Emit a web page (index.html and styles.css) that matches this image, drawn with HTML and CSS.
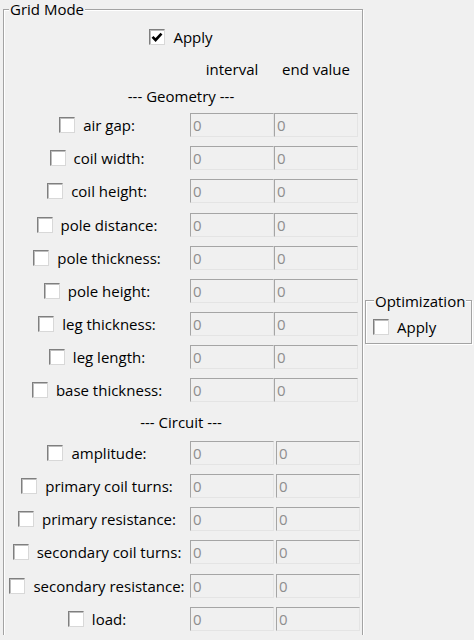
FILE: index.html
```html
<!DOCTYPE html>
<html>
<head>
<meta charset="utf-8">
<link rel="stylesheet" href="styles.css">
</head>
<body>
<div class="page">
  <fieldset class="panel grid-mode">
    <legend>Grid Mode</legend>
    <div class="grid">
      <div class="span-all center"><span class="cb checked"><svg viewBox="0 0 14 14" width="14" height="14"><path d="M2.5 6.8 L5.6 10 L11.5 3.6" fill="none" stroke="#000" stroke-width="2.6"/></svg></span><span>Apply</span></div>
      <div></div>
      <div class="colhead">interval</div>
      <div class="colhead">end value</div>
      <div class="span-all center section geo">--- Geometry ---</div>

      <div class="lbl"><span class="cb"></span><span>air gap:</span></div><div class="field">0</div><div class="field">0</div>
      <div class="lbl"><span class="cb"></span><span>coil width:</span></div><div class="field">0</div><div class="field">0</div>
      <div class="lbl"><span class="cb"></span><span>coil height:</span></div><div class="field">0</div><div class="field">0</div>
      <div class="lbl"><span class="cb"></span><span>pole distance:</span></div><div class="field">0</div><div class="field">0</div>
      <div class="lbl"><span class="cb"></span><span>pole thickness:</span></div><div class="field">0</div><div class="field">0</div>
      <div class="lbl"><span class="cb"></span><span>pole height:</span></div><div class="field">0</div><div class="field">0</div>
      <div class="lbl"><span class="cb"></span><span>leg thickness:</span></div><div class="field">0</div><div class="field">0</div>
      <div class="lbl"><span class="cb"></span><span>leg length:</span></div><div class="field">0</div><div class="field">0</div>
      <div class="lbl"><span class="cb"></span><span>base thickness:</span></div><div class="field">0</div><div class="field">0</div>

      <div class="span-all center section">--- Circuit ---</div>

      <div class="lbl"><span class="cb"></span><span>amplitude:</span></div><div class="field">0</div><div class="field">0</div>
      <div class="lbl"><span class="cb"></span><span>primary coil turns:</span></div><div class="field">0</div><div class="field">0</div>
      <div class="lbl"><span class="cb"></span><span>primary resistance:</span></div><div class="field">0</div><div class="field">0</div>
      <div class="lbl"><span class="cb"></span><span>secondary coil turns:</span></div><div class="field">0</div><div class="field">0</div>
      <div class="lbl"><span class="cb"></span><span>secondary resistance:</span></div><div class="field">0</div><div class="field">0</div>
      <div class="lbl"><span class="cb"></span><span>load:</span></div><div class="field">0</div><div class="field">0</div>
    </div>
  </fieldset>

  <fieldset class="panel optimization">
    <legend>Optimization</legend>
    <div class="opt-row"><span class="cb"></span><span>Apply</span></div>
  </fieldset>
</div>
</body>
</html>
```

FILE: styles.css
```css
html, body {
  margin: 0;
  padding: 0;
  background: #f0f0f0;
}

body {
  font-family: "Open Sans", "Noto Sans", sans-serif;
  font-size: 15px;
  line-height: 18px;
  color: #000;
}

.page {
  display: flex;
  align-items: flex-start;
  height: 635px;
  padding-left: 3px;
}

.panel {
  margin: 0;
  border: 1px solid #a3a3a3;
  box-shadow: inset 1px 1px 0 #fff, 1px 1px 0 #fff;
  min-width: 0;
}

.panel legend {
  padding: 0 1px;
  line-height: 18px;
  background: #f0f0f0;
}

.grid-mode {
  width: 357px;
  padding: 0 1px 0 0;
}

.grid-mode legend {
  margin-left: 5px;
}

.grid {
  display: grid;
  grid-template-columns: 186px 84px 84px;
  column-gap: 0;
  grid-template-rows: 37px 27px 26.4px repeat(9, 33.2px) 29.2px repeat(6, 33.2px);
  align-items: center;
}

.grid > .field:nth-child(3n) {
  margin-left: 2px;
}

.span-all {
  grid-column: 1 / -1;
}

.center {
  display: flex;
  justify-content: center;
  align-items: center;
  gap: 8px;
}

.section.geo {
  padding-top: 2px;
}

.colhead {
  text-align: center;
}

.lbl {
  display: flex;
  justify-content: center;
  align-items: center;
  gap: 8px;
  white-space: nowrap;
}

.cb {
  box-sizing: border-box;
  width: 16px;
  height: 16px;
  flex: none;
  background: #fff;
  border: 1px solid;
  border-color: #7f7f7f #d8d8d8 #d8d8d8 #7f7f7f;
  box-shadow: inset 1px 1px 0 #bdbdbd;
  display: flex;
  align-items: center;
  justify-content: center;
}

.cb svg {
  display: block;
}

.field {
  box-sizing: border-box;
  width: 84px;
  height: 24px;
  border: 1px solid;
  border-color: #a5a5a5 #e4e4e4 #e4e4e4 #a5a5a5;
  background: #f0f0f0;
  color: #8e8e8e;
  padding-left: 2px;
  line-height: 22px;
}

.optimization {
  align-self: center;
  margin: 0 0 0 2px;
  width: 98px;
  padding: 0 0 0 7px;
}

.optimization legend {
  margin-left: 1px;
}

.opt-row {
  display: flex;
  align-items: center;
  gap: 8px;
  height: 33px;
  padding-top: 2px;
  box-sizing: border-box;
}
```
